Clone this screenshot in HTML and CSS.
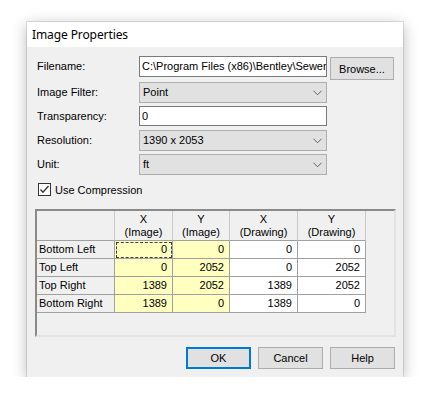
FILE: index.html
```html
<!DOCTYPE html>
<html>
<head>
<meta charset="utf-8">
<link rel="stylesheet" href="styles.css">
</head>
<body>
<div class="window">
  <div class="titlebar">Image Properties</div>
  <div class="content">
    <div class="row r1">
      <div class="label">Filename:</div>
      <div class="textbox">C:\Program Files (x86)\Bentley\SewerCAD\Images\site.tif</div>
      <div class="btn browse">Browse...</div>
    </div>
    <div class="row r2">
      <div class="label">Image Filter:</div>
      <div class="combo"><span>Point</span><svg class="chev" width="9" height="6" viewBox="0 0 9 6"><polyline points="0.5,0.8 4.5,4.8 8.5,0.8" fill="none" stroke="#606060" stroke-width="1"/></svg></div>
    </div>
    <div class="row r3">
      <div class="label">Transparency:</div>
      <div class="textbox small">0</div>
    </div>
    <div class="row r4">
      <div class="label">Resolution:</div>
      <div class="combo"><span>1390 x 2053</span><svg class="chev" width="9" height="6" viewBox="0 0 9 6"><polyline points="0.5,0.8 4.5,4.8 8.5,0.8" fill="none" stroke="#606060" stroke-width="1"/></svg></div>
    </div>
    <div class="row r5">
      <div class="label">Unit:</div>
      <div class="combo"><span>ft</span><svg class="chev" width="9" height="6" viewBox="0 0 9 6"><polyline points="0.5,0.8 4.5,4.8 8.5,0.8" fill="none" stroke="#606060" stroke-width="1"/></svg></div>
    </div>
    <div class="check">
      <svg class="box" width="13" height="13" viewBox="0 0 13 13"><rect x="0.5" y="0.5" width="12" height="12" fill="#fff" stroke="#333"/><polyline points="2.5,6.5 5,9.2 10.5,3" fill="none" stroke="#333" stroke-width="1.3"/></svg>
      <span>Use Compression</span>
    </div>
    <div class="gridframe">
      <div class="grid">
        <div class="cell hdr"></div>
        <div class="cell hdr">X<br>(Image)</div>
        <div class="cell hdr">Y<br>(Image)</div>
        <div class="cell hdr">X<br>(Drawing)</div>
        <div class="cell hdr">Y<br>(Drawing)</div>

        <div class="cell rh">Bottom Left</div>
        <div class="cell yl focus">0</div>
        <div class="cell yl">0</div>
        <div class="cell wh">0</div>
        <div class="cell wh">0</div>

        <div class="cell rh">Top Left</div>
        <div class="cell yl">0</div>
        <div class="cell yl">2052</div>
        <div class="cell wh">0</div>
        <div class="cell wh">2052</div>

        <div class="cell rh">Top Right</div>
        <div class="cell yl">1389</div>
        <div class="cell yl">2052</div>
        <div class="cell wh">1389</div>
        <div class="cell wh">2052</div>

        <div class="cell rh">Bottom Right</div>
        <div class="cell yl">1389</div>
        <div class="cell yl">0</div>
        <div class="cell wh">1389</div>
        <div class="cell wh">0</div>
      </div>
    </div>
    <div class="buttons">
      <div class="btn ok">OK</div>
      <div class="btn">Cancel</div>
      <div class="btn">Help</div>
    </div>
  </div>
</div>
</body>
</html>
```
FILE: styles.css
```css
html, body {
  margin: 0;
  background: #ffffff;
}
body {
  padding: 22px 0 0 27px;
  font-family: "Liberation Sans", Arial, sans-serif;
  font-size: 11px;
  color: #000;
}
.window {
  width: 376px;
  height: 355px;
  background: #f0f0f0;
  box-shadow: 0 0 0 1px rgba(0,0,0,0.10), 0 3px 14px rgba(0,0,0,0.28);
  display: flex;
  flex-direction: column;
}
.titlebar {
  height: 25px;
  background: #ffffff;
  font-family: "Noto Sans", "Open Sans", sans-serif;
  font-size: 12px;
  line-height: 25px;
  padding-left: 5px;
  color: #000;
  letter-spacing: -0.1px;
}
.content {
  flex: 1;
  display: flex;
  flex-direction: column;
  padding-top: 9px;
}
.row {
  display: flex;
  align-items: flex-start;
  padding-left: 10px;
  height: 21px;
}
.r2 { margin-top: 5px; }
.r3 { margin-top: 3px; height: 20px; }
.r4 { margin-top: 4px; }
.r5 { margin-top: 3px; }
.label {
  width: 102px;
  line-height: 21px;
  color: #000;
}
.textbox {
  box-sizing: border-box;
  width: 188px;
  height: 21px;
  background: #fff;
  border: 1px solid #7a7a7a;
  padding-left: 2px;
  line-height: 19px;
  white-space: nowrap;
  overflow: hidden;
}
.textbox.small {
  height: 20px;
  line-height: 18px;
}
.combo {
  box-sizing: border-box;
  width: 188px;
  height: 21px;
  background: #e1e1e1;
  border: 1px solid #adadad;
  padding-left: 3px;
  line-height: 19px;
  display: flex;
  justify-content: space-between;
  align-items: center;
}
.chev {
  margin-right: 4px;
}
.btn {
  box-sizing: border-box;
  width: 65px;
  height: 23px;
  background: #e1e1e1;
  border: 1px solid #adadad;
  display: flex;
  align-items: center;
  justify-content: center;
}
.browse {
  margin-left: 3px;
  margin-top: 1px;
  width: 64px;
}
.check {
  display: flex;
  align-items: center;
  margin-top: 8px;
  margin-left: 11px;
  height: 13px;
}
.check span {
  margin-left: 4px;
}
.gridframe {
  box-sizing: border-box;
  margin-top: 13px;
  margin-left: 8px;
  width: 361px;
  height: 128px;
  border: 2px solid;
  border-color: #8a8a8a #e3e3e3 #e3e3e3 #8a8a8a;
  background: #f0f0f0;
}
.grid {
  display: grid;
  grid-template-columns: 78px 58px 57px 68px 68px;
  grid-template-rows: 30px 18px 18px 18px 18px;
}
.cell {
  box-sizing: border-box;
  border-right: 1px solid #a0a0a0;
  border-bottom: 1px solid #a0a0a0;
  line-height: 17px;
  white-space: nowrap;
  overflow: hidden;
}
.hdr {
  background: #f0f0f0;
  text-align: center;
  line-height: 13px;
  padding-top: 2px;
  border-right-color: #c8c8c8;
  border-bottom-color: #a0a0a0;
}
.rh {
  background: #f0f0f0;
  padding-left: 2px;
}
.yl {
  background: #ffffc0;
  text-align: right;
  padding-right: 5px;
}
.wh {
  background: #ffffff;
  text-align: right;
  padding-right: 5px;
}
.focus {
  outline: 1px dashed #404040;
  outline-offset: -2px;
}
.buttons {
  display: flex;
  justify-content: flex-end;
  gap: 7px;
  margin-top: 10px;
  padding-right: 8px;
}
.buttons .btn {
  height: 22px;
}
.btn.ok {
  border: 2px solid #0078d7;
}
```
